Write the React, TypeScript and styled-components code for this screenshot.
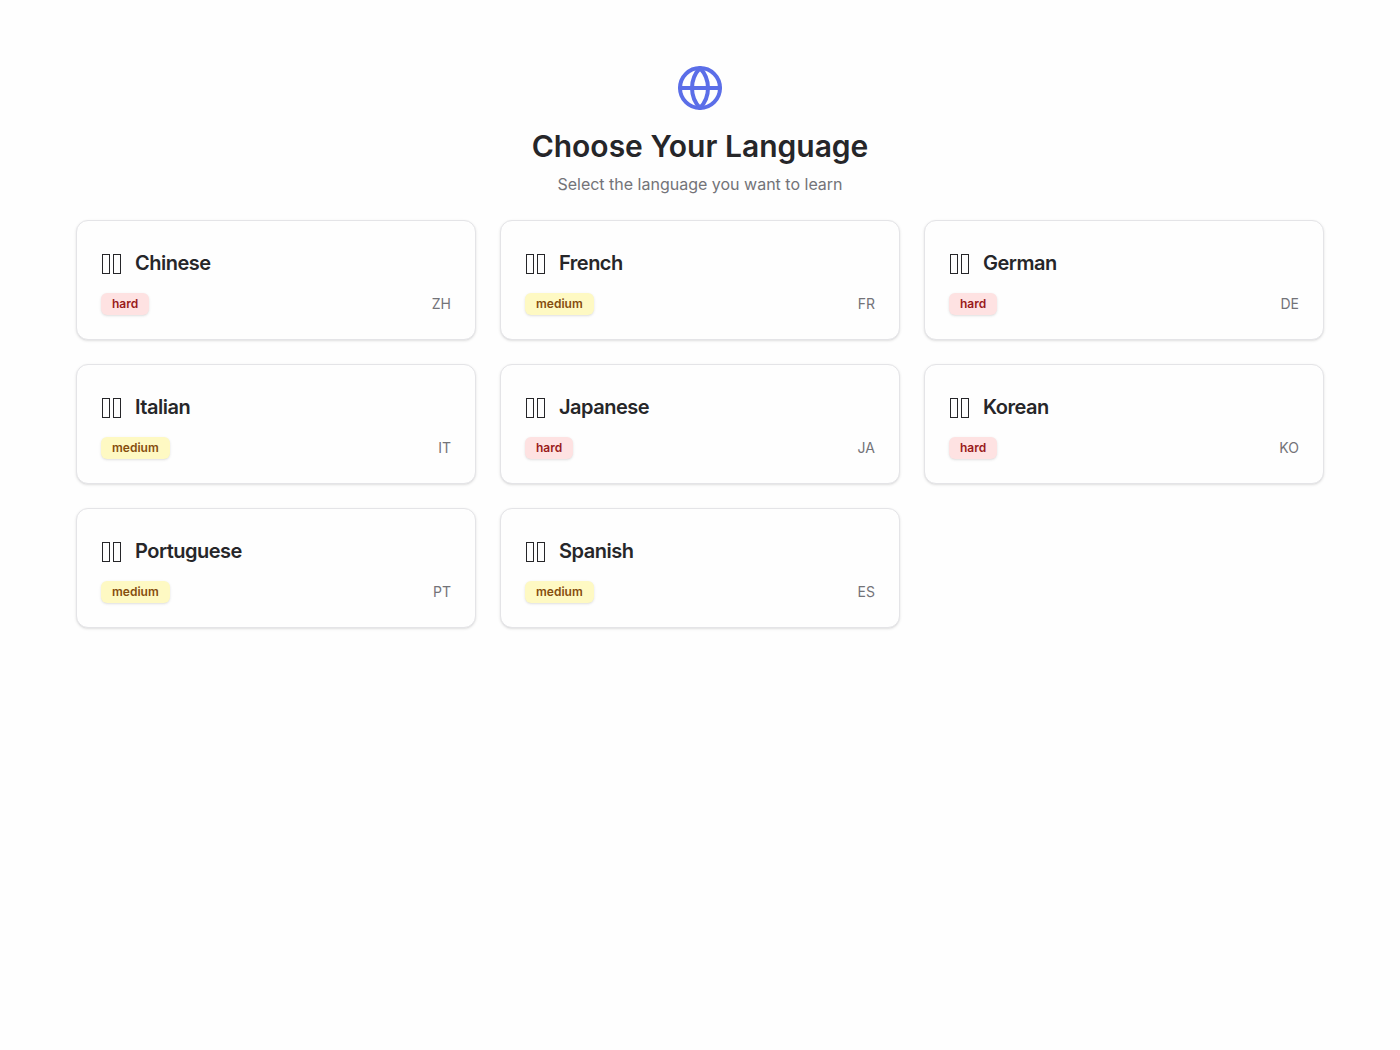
import React from "react";
import styled, { createGlobalStyle } from "styled-components";
import { Globe } from "lucide-react";

type Difficulty = "easy" | "medium" | "hard";

interface Language {
  code: string;
  name: string;
  difficulty: Difficulty;
}

const languages: Language[] = [
  { code: "ZH", name: "Chinese", difficulty: "hard" },
  { code: "FR", name: "French", difficulty: "medium" },
  { code: "DE", name: "German", difficulty: "hard" },
  { code: "IT", name: "Italian", difficulty: "medium" },
  { code: "JA", name: "Japanese", difficulty: "hard" },
  { code: "KO", name: "Korean", difficulty: "hard" },
  { code: "PT", name: "Portuguese", difficulty: "medium" },
  { code: "ES", name: "Spanish", difficulty: "medium" },
];

const badgeColors: Record<Difficulty, { background: string; text: string }> = {
  easy: { background: "#dcfce7", text: "#166534" },
  medium: { background: "#fef9c3", text: "#854d0e" },
  hard: { background: "#fee2e2", text: "#991b1b" },
};

const GlobalStyle = createGlobalStyle`
  *, *::before, *::after {
    box-sizing: border-box;
  }

  body {
    margin: 0;
    background: #fefefe;
    color: #262629;
    font-family: Inter, "Liberation Sans", sans-serif;
    font-size: 16px;
    line-height: 24px;
  }
`;

const Page = styled.main`
  max-width: 1280px;
  margin: 0 auto;
  padding: 64px 16px;
`;

const Header = styled.header`
  display: flex;
  flex-direction: column;
  align-items: center;
  margin-bottom: 24px;
  text-align: center;
`;

const GlobeIcon = styled(Globe)`
  width: 48px;
  height: 48px;
  margin-bottom: 16px;
  color: #5b6ee8;
`;

const Title = styled.h1`
  margin: 0 0 8px;
  font-size: 30px;
  font-weight: 600;
  line-height: 36px;
`;

const Subtitle = styled.p`
  margin: 0;
  color: #737378;
`;

const Grid = styled.div`
  display: grid;
  grid-template-columns: repeat(3, minmax(0, 1fr));
  gap: 24px;

  @media (max-width: 1023px) {
    grid-template-columns: repeat(2, minmax(0, 1fr));
  }

  @media (max-width: 640px) {
    grid-template-columns: minmax(0, 1fr);
  }
`;

const Card = styled.article`
  display: flex;
  flex-direction: column;
  gap: 12px;
  padding: 24px;
  border: 1px solid #e4e4e7;
  border-radius: 12px;
  background: #fefefe;
  box-shadow: 0 1px 3px rgba(0, 0, 0, 0.1), 0 1px 2px -1px rgba(0, 0, 0, 0.1);
  cursor: pointer;
`;

const CardTitle = styled.h2`
  display: flex;
  align-items: center;
  gap: 12px;
  margin: 0;
  font-size: 20px;
  font-weight: 600;
  line-height: 36px;
  letter-spacing: -0.025em;
`;

const Flag = styled.span`
  display: flex;
  gap: 3px;
  padding: 2px 2px 0 1px;
`;

const FlagBox = styled.span`
  width: 8px;
  height: 20px;
  border: 1px solid currentColor;
`;

const CardFooter = styled.div`
  display: flex;
  align-items: center;
  justify-content: space-between;
`;

const Badge = styled.span<{ $difficulty: Difficulty }>`
  padding: 3px 11px;
  border-radius: 6px;
  background: ${({ $difficulty }) => badgeColors[$difficulty].background};
  color: ${({ $difficulty }) => badgeColors[$difficulty].text};
  font-size: 12px;
  font-weight: 600;
  line-height: 16px;
  box-shadow: 0 1px 3px rgba(0, 0, 0, 0.1), 0 1px 2px -1px rgba(0, 0, 0, 0.1);
`;

const Code = styled.span`
  color: #737378;
  font-size: 14px;
  line-height: 20px;
`;

export default function App() {
  return (
    <>
      <GlobalStyle />
      <Page>
        <Header>
          <GlobeIcon aria-hidden="true" />
          <Title>Choose Your Language</Title>
          <Subtitle>Select the language you want to learn</Subtitle>
        </Header>
        <Grid>
          {languages.map(({ code, name, difficulty }) => (
            <Card key={code}>
              <CardTitle>
                <Flag aria-hidden="true">
                  <FlagBox />
                  <FlagBox />
                </Flag>
                {name}
              </CardTitle>
              <CardFooter>
                <Badge $difficulty={difficulty}>{difficulty}</Badge>
                <Code>{code}</Code>
              </CardFooter>
            </Card>
          ))}
        </Grid>
      </Page>
    </>
  );
}
